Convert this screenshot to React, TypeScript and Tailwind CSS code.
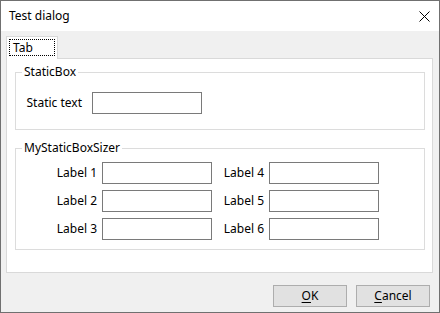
const font = "font-['Segoe_UI','Noto_Sans',sans-serif]";

function Field({ label, labelW }: { label: string; labelW: string }) {
  return (
    <div className="flex items-center">
      <div className={`${labelW} pr-[5px] text-right whitespace-nowrap`}>{label}</div>
      <div className="w-[110px] h-[22px] border border-[#7a7a7a] bg-white" />
    </div>
  );
}

function GroupBox({ title, className, children }: any) {
  return (
    <fieldset className={`border border-[#dcdcdc] ${className ?? ""}`}>
      <legend className="ml-[6px] px-[2px] leading-4">{title}</legend>
      {children}
    </fieldset>
  );
}

export default function App() {
  return (
    <div className={`${font} text-[12px] text-black w-[440px] h-[313px] flex flex-col bg-[#f0f0f0] border border-[#707070]`}>
      {/* title bar */}
      <div className="h-[30px] shrink-0 bg-white flex items-center justify-between pl-2 pr-[9px]">
        <span className="text-[12px]">Test dialog</span>
        <svg width="11" height="11" viewBox="0 0 11 11" className="mt-[1px]">
          <path d="M0.5 0.5L10.5 10.5M10.5 0.5L0.5 10.5" stroke="#000" strokeWidth="1" fill="none" />
        </svg>
      </div>

      <div className="flex-1 flex flex-col pl-[5px] pr-[6px] pt-[5px]">
        {/* tab strip */}
        <div className="flex">
          <div className="relative z-10 -mb-px w-[52px] h-[23px] bg-white border border-b-0 border-[#d9d9d9] pt-[2px] px-[2px]">
            <div className="h-[17px] border border-dotted border-black pl-[3px] leading-[15px]">Tab</div>
          </div>
        </div>

        {/* page */}
        <div className="h-[215px] shrink-0 bg-white border border-[#d9d9d9] pt-[5px] pl-[8px] pr-[7px]">
          <GroupBox title="StaticBox" className="pt-[12px] pb-[15px]">
            <div className="flex items-center">
              <div className="w-[76px] pr-[10px] text-right">Static text</div>
              <div className="w-[110px] h-[22px] border border-[#7a7a7a] bg-white" />
            </div>
          </GroupBox>

          <GroupBox title="MyStaticBoxSizer" className="mt-[10px] pt-[6px] pb-[9px]">
            <div className="grid grid-cols-[auto_auto] justify-start gap-y-[6px]">
              <Field label="Label 1" labelW="w-[86px]" />
              <Field label="Label 4" labelW="w-[57px]" />
              <Field label="Label 2" labelW="w-[86px]" />
              <Field label="Label 5" labelW="w-[57px]" />
              <Field label="Label 3" labelW="w-[86px]" />
              <Field label="Label 6" labelW="w-[57px]" />
            </div>
          </GroupBox>
        </div>

        {/* buttons */}
        <div className="flex justify-end gap-[9px] pt-[12px] pr-[3px]">
          <button className="w-[74px] h-[22px] bg-[#e1e1e1] border border-[#adadad] leading-[20px]">
            <span className="underline underline-offset-2">O</span>K
          </button>
          <button className="w-[74px] h-[22px] bg-[#e1e1e1] border border-[#adadad] leading-[20px]">
            <span className="underline underline-offset-2">C</span>ancel
          </button>
        </div>
      </div>
    </div>
  );
}
